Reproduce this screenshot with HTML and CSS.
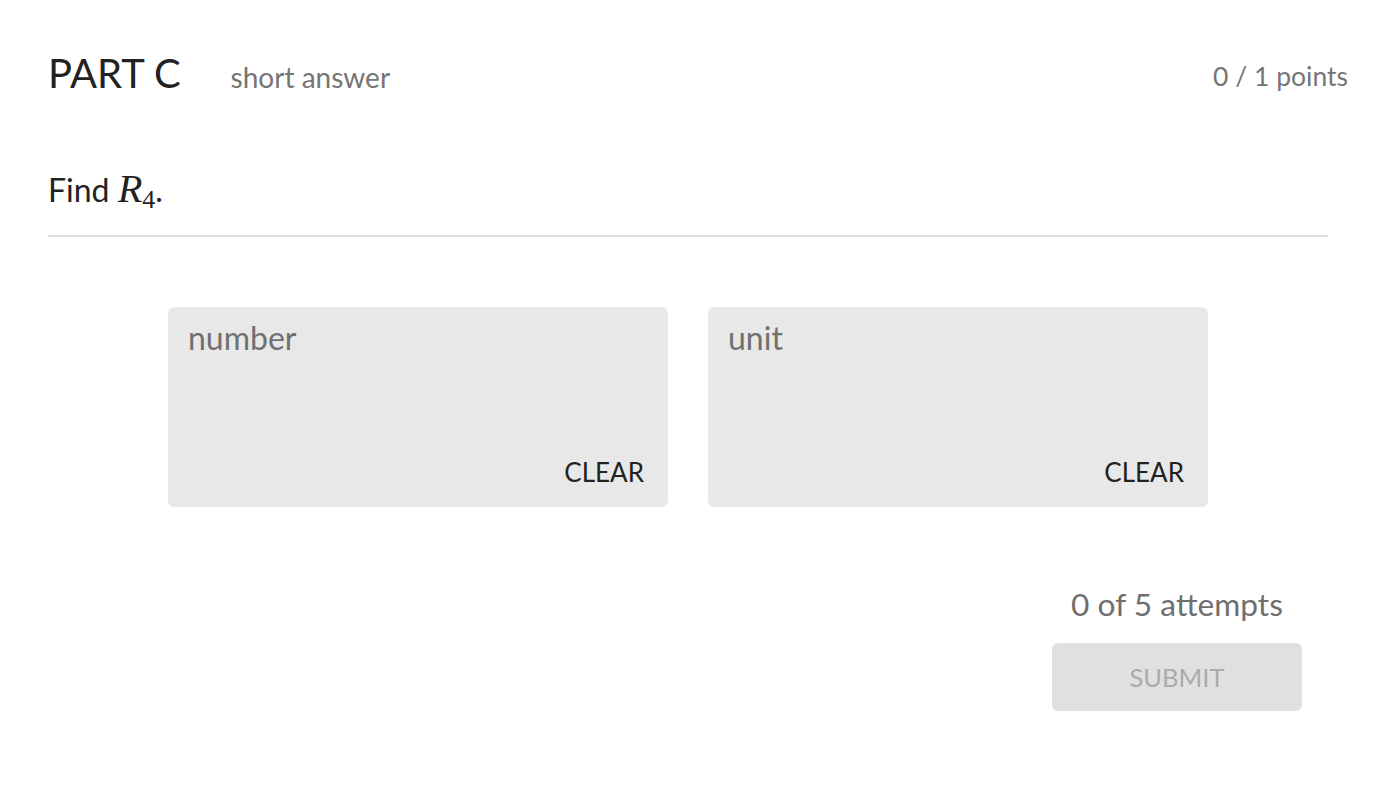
FILE: index.html
```html
<!DOCTYPE html>
<html lang="en">
<head>
    <meta charset="UTF-8">
    <meta name="viewport" content="width=device-width, initial-scale=1.0">
    <title>Part C</title>
    <link rel="stylesheet" href="styles.css">
</head>
<body>

<div class="page">
    <div class="part-header">
        <h1 class="part-title">PART C</h1>
        <span class="part-type">short answer</span>
        <span class="part-points">0 / 1 points</span>
    </div>

    <div class="question">
        Find <span class="math"><i>R</i><sub>4</sub></span>.
    </div>

    <div class="answers">
        <div class="answer-box">
            <input type="text" class="answer-input" placeholder="number">
            <button class="clear-btn">CLEAR</button>
        </div>
        <div class="answer-box">
            <input type="text" class="answer-input" placeholder="unit">
            <button class="clear-btn">CLEAR</button>
        </div>
    </div>

    <div class="submit-area">
        <div class="submit-col">
            <div class="attempts">0 of 5 attempts</div>
            <button class="submit-btn" disabled>SUBMIT</button>
        </div>
    </div>
</div>

</body>
</html>
```

FILE: styles.css
```css
body {
    margin: 0;
    font-family: Lato, "Open Sans", sans-serif;
    color: #222;
    background: #fff;
}
.page {
    padding: 49px 48px 0 48px;
}
.part-header {
    display: flex;
    align-items: baseline;
    margin-right: -20px;
}
.part-title {
    margin: 0;
    font-size: 40px;
    font-weight: 400;
    line-height: 1.2;
    color: #222;
}
.part-type {
    margin-left: 50px;
    font-size: 28px;
    color: #757575;
}
.part-points {
    margin-left: auto;
    font-size: 26.5px;
    color: #757575;
    position: relative;
    top: -2px;
}
.question {
    margin-top: 74px;
    padding-bottom: 26px;
    font-size: 32px;
    line-height: 38px;
    border-bottom: 2px solid #dfdfdf;
}
.math {
    font-family: "Liberation Serif", "DejaVu Serif", serif;
    font-size: 1.26em;
    line-height: 0;
}
.math sub {
    font-style: normal;
    font-size: 0.64em;
    line-height: 0;
    vertical-align: -0.22em;
}
.answers {
    display: flex;
    justify-content: center;
    gap: 40px;
    margin-top: 70px;
}
.answer-box {
    width: 500px;
    height: 200px;
    box-sizing: border-box;
    display: flex;
    flex-direction: column;
    padding: 12px 24px 19px 20px;
    background: #e8e8e8;
    border-radius: 6px;
}
.answer-input {
    border: none;
    background: transparent;
    outline: none;
    padding: 0;
    font-family: inherit;
    font-size: 32px;
    line-height: 1.2;
    color: #222;
}
.answer-input::placeholder {
    color: #707070;
}
.clear-btn {
    margin-top: auto;
    align-self: flex-end;
    border: none;
    background: none;
    padding: 0;
    font-family: inherit;
    font-size: 26px;
    line-height: 1.2;
    color: #222;
    cursor: pointer;
}
.submit-area {
    display: flex;
    justify-content: flex-end;
    padding-right: 26px;
    margin-top: 78px;
}
.submit-col {
    display: flex;
    flex-direction: column;
    align-items: center;
    gap: 20px;
}
.attempts {
    font-size: 31.7px;
    line-height: 1.2;
    color: #6f6f6f;
}
.submit-btn {
    width: 250px;
    height: 68px;
    border: none;
    border-radius: 6px;
    background: #e0e0e0;
    font-family: inherit;
    font-size: 25.5px;
    color: #ababab;
}
```
